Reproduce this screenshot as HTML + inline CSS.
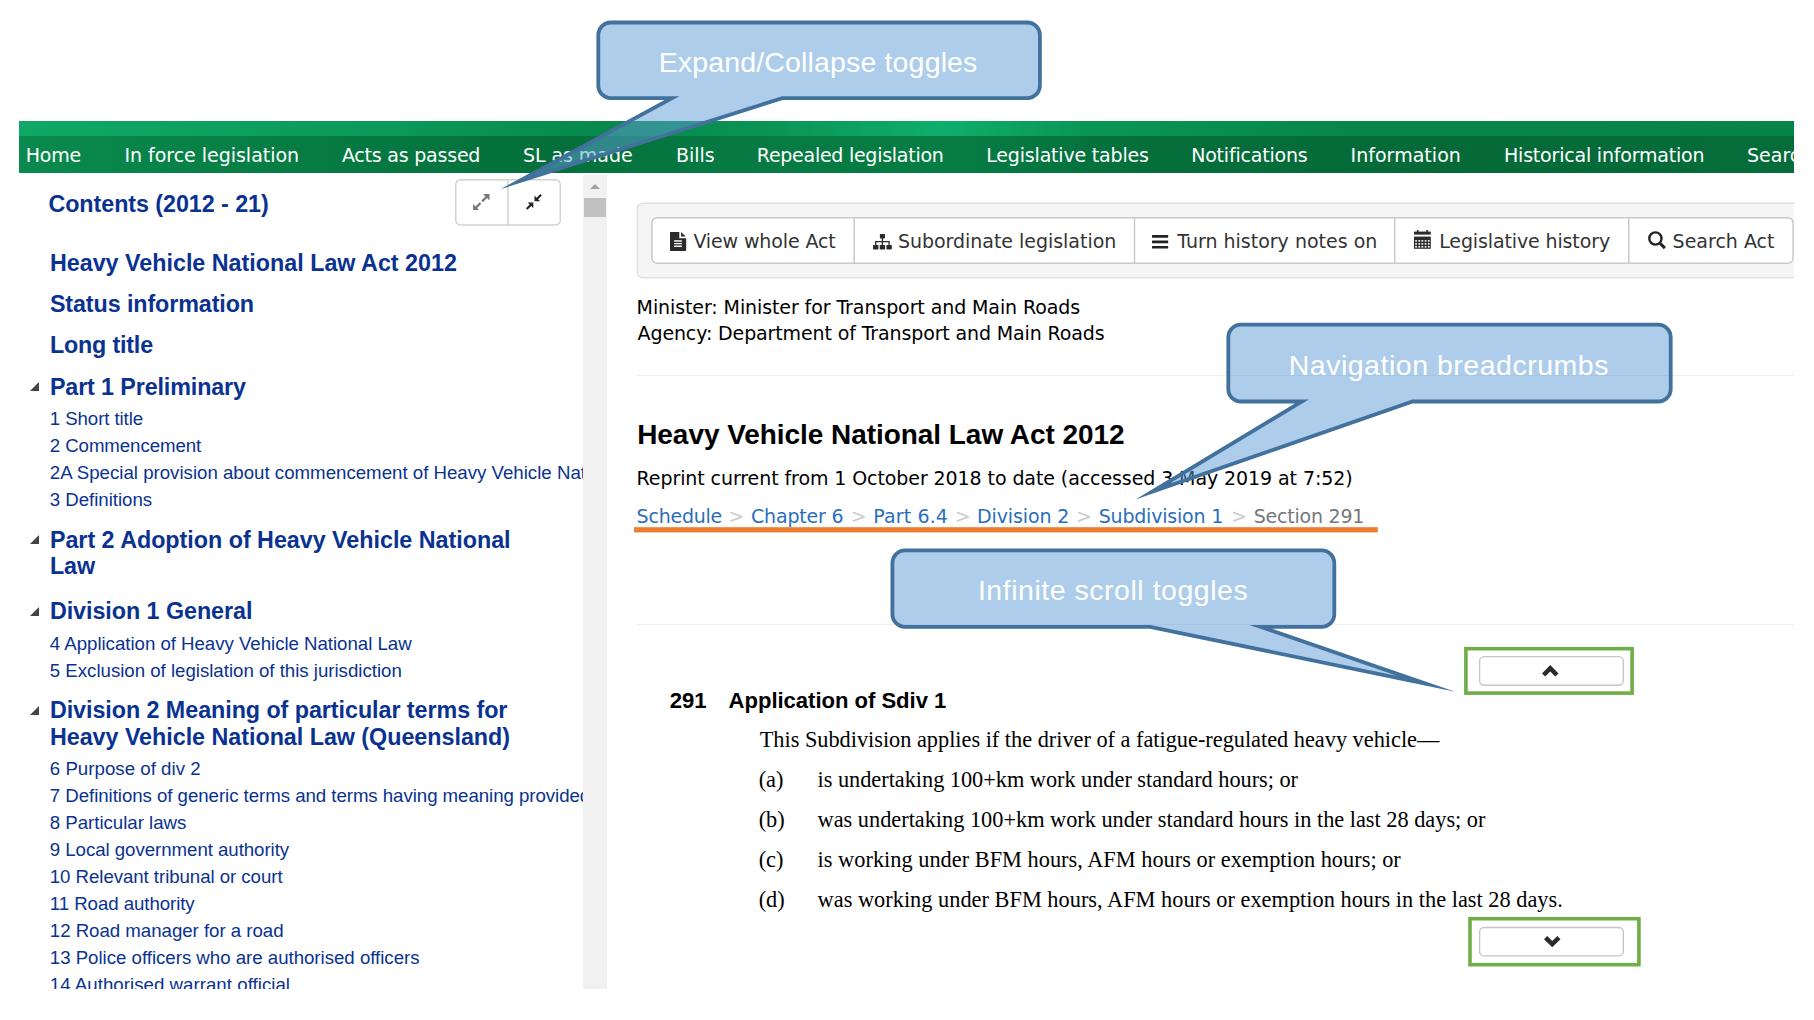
<!DOCTYPE html>
<html lang="en">
<head>
<meta charset="utf-8">
<title>Heavy Vehicle National Law Act 2012</title>
<style>
html,body{margin:0;padding:0;background:#fff}
body{width:1814px;height:1020px;position:relative;overflow:hidden;font-family:"DejaVu Sans","Liberation Sans",sans-serif;color:#000}
#shot{position:absolute;left:19px;top:121px;width:1775px;height:868px;overflow:hidden;background:#fff}
.t{position:absolute;white-space:pre;line-height:normal;margin:0;padding:0;font-weight:400;font-style:normal;text-decoration:none;display:block}
/* nav */
#nav{position:absolute;left:0;top:0;width:1775px;height:52px;overflow:hidden;
 background:linear-gradient(90deg,#0a8a4e 0%,#067a42 18%,#056f3c 30%,#067a42 40%,#067d44 52%,#056e3b 64%,#056a38 80%,#056c3a 100%)}
#nav .strip{position:absolute;left:0;top:0;width:100%;height:15px;
 background:linear-gradient(90deg,#10a866 0%,#0b9a5b 20%,#08884c 33%,#0a9355 42%,#0fae6c 52%,#0a9657 60%,#07864b 75%,#07844a 100%)}
.nv{color:#fff;font-family:"DejaVu Sans","Liberation Sans",sans-serif}
/* sidebar */
#side{position:absolute;left:0;top:52px;width:564px;height:816px;overflow:hidden;background:#fff}
.hd{font-family:"Liberation Sans",sans-serif;font-weight:700;color:#0a3291}
.it{font-family:"Liberation Sans",sans-serif;color:#0a3291}
.tri{position:absolute;width:0;height:0;border-style:solid;border-width:0 0 9px 9.4px;border-color:transparent transparent #444 transparent}
#tog{position:absolute}
#tog svg{position:absolute}
#sbar{position:absolute;background:#f1f1f1}
#sbar .th{position:absolute;background:#c1c1c1}
#sbar .up{position:absolute;width:0;height:0;border-style:solid;border-color:transparent transparent #a3a3a3 transparent}
/* main */
#main{position:absolute;left:588px;top:52px;width:1187px;height:816px;overflow:hidden;background:#fff}
#well{position:absolute;background:#f5f5f5;border-radius:5.5px}
#grp{position:absolute;background:#fff;border-radius:5.5px}
.frm{position:absolute;left:0;top:0;overflow:hidden}
.bdv{position:absolute;width:1.4px;background:#ccc}
.bt{color:#333}
.ico{position:absolute;overflow:visible}
.mt{color:#000}
.hr{position:absolute;margin:0;border:0;height:1.4px;background:#eee;left:29.6px;width:1160px}
.ttl{font-family:"Liberation Sans",sans-serif;font-weight:700;color:#000}
.cl{color:#2a6ebb}.cs{color:#ccc}.ce{color:#777}
.sh{font-family:"Liberation Sans",sans-serif;font-weight:700}
.bd{font-family:"Liberation Serif",serif}
/* overlays */
#ov{position:absolute;left:0;top:0;width:1814px;height:1020px;pointer-events:none}
.co{color:#fff;font-family:"Liberation Sans",sans-serif}
</style>
</head>
<body>
<div id="shot">
<nav id="nav"><div class="strip"></div>
<a class="t nv" style="left:6.70px;top:23.00px;font-size:19.0px;letter-spacing:-0.2px;">Home</a>
<a class="t nv" style="left:105.40px;top:23.00px;font-size:19.0px;letter-spacing:-0.021px;">In force legislation</a>
<a class="t nv" style="left:322.90px;top:23.00px;font-size:19.0px;letter-spacing:-0.216px;">Acts as passed</a>
<a class="t nv" style="left:504.00px;top:23.00px;font-size:19.0px;letter-spacing:-0.066px;">SL as made</a>
<a class="t nv" style="left:657.00px;top:23.00px;font-size:19.0px;">Bills</a>
<a class="t nv" style="left:737.80px;top:23.00px;font-size:19.0px;letter-spacing:-0.263px;">Repealed legislation</a>
<a class="t nv" style="left:967.30px;top:23.00px;font-size:19.0px;letter-spacing:-0.188px;">Legislative tables</a>
<a class="t nv" style="left:1172.20px;top:23.00px;font-size:19.0px;letter-spacing:-0.2px;">Notifications</a>
<a class="t nv" style="left:1331.50px;top:23.00px;font-size:19.0px;letter-spacing:0.04px;">Information</a>
<a class="t nv" style="left:1485.00px;top:23.00px;font-size:19.0px;letter-spacing:-0.2px;">Historical information</a>
<a class="t nv" style="left:1728.00px;top:23.00px;font-size:19.0px;">Search</a>
</nav>
<aside id="side">
<h2 class="t hd" style="left:29.40px;top:18.00px;font-size:23.3px;letter-spacing:-0.053px;">Contents (2012 - 21)</h2>
<div id="tog" style="left:435.50px;top:6.10px;width:106.10px;height:46.80px"><svg style="left:0;top:0" width="106.1" height="46.8" viewBox="454.5 179.1 106.1 46.8"><rect x="455.25" y="179.85" width="104.60" height="45.30" rx="5" fill="#fff" stroke="#d2d2d2" stroke-width="1.5"/><path d="M507.4 179.85V225.15" stroke="#d2d2d2" stroke-width="1.5"/></svg><svg style="left:18.70px;top:14.70px" width="16.6" height="16.4" viewBox="0 0 16 16"><g fill="#777" stroke="none"><path d="M9.7 0H16V6.3L13.6 3.9 9.55 7.95 8.05 6.45 12.1 2.4Z"/><path d="M6.3 16H0V9.7L2.4 12.1 6.45 8.05 7.95 9.55 3.9 13.6Z"/></g></svg><svg style="left:71.50px;top:15.00px" width="15.8" height="15.8" viewBox="0 0 16 16"><g fill="#222" stroke="none"><path d="M8.6 7.4V1.6L10.75 3.75 14.5 0 16 1.5 12.25 5.25 14.4 7.4Z"/><path d="M7.4 8.6V14.4L5.25 12.25 1.5 16 0 14.5 3.75 10.75 1.6 8.6Z"/></g></svg></div>
<a class="t hd" style="left:30.90px;top:77.00px;font-size:23.3px;">Heavy Vehicle National Law Act 2012</a>
<a class="t hd" style="left:30.90px;top:118.00px;font-size:23.3px;letter-spacing:-0.094px;">Status information</a>
<a class="t hd" style="left:30.90px;top:159.00px;font-size:23.3px;letter-spacing:-0.178px;">Long title</a>
<a class="t hd" style="left:30.90px;top:201.00px;font-size:23.3px;letter-spacing:-0.117px;">Part 1 Preliminary</a>
<a class="t it" style="left:30.80px;top:235.00px;font-size:18.66px;letter-spacing:-0.084px;">1 Short title</a>
<a class="t it" style="left:30.80px;top:262.00px;font-size:18.66px;letter-spacing:-0.077px;">2 Commencement</a>
<a class="t it" style="left:30.80px;top:289.00px;font-size:18.66px;">2A Special provision about commencement of Heavy Vehicle National Law</a>
<a class="t it" style="left:30.80px;top:316.00px;font-size:18.66px;letter-spacing:-0.034px;">3 Definitions</a>
<a class="t hd" style="left:30.90px;top:354.00px;font-size:23.3px;letter-spacing:-0.016px;">Part 2 Adoption of Heavy Vehicle National</a>
<a class="t hd" style="left:30.90px;top:380.00px;font-size:23.3px;">Law</a>
<a class="t hd" style="left:30.90px;top:425.00px;font-size:23.3px;letter-spacing:-0.047px;">Division 1 General</a>
<a class="t it" style="left:30.80px;top:460.00px;font-size:18.66px;letter-spacing:-0.028px;">4 Application of Heavy Vehicle National Law</a>
<a class="t it" style="left:30.80px;top:487.00px;font-size:18.66px;letter-spacing:-0.013px;">5 Exclusion of legislation of this jurisdiction</a>
<a class="t hd" style="left:30.90px;top:524.00px;font-size:23.3px;letter-spacing:-0.049px;">Division 2 Meaning of particular terms for</a>
<a class="t hd" style="left:30.90px;top:551.00px;font-size:23.3px;letter-spacing:-0.021px;">Heavy Vehicle National Law (Queensland)</a>
<a class="t it" style="left:30.80px;top:585.00px;font-size:18.66px;letter-spacing:0.023px;">6 Purpose of div 2</a>
<a class="t it" style="left:30.80px;top:612.00px;font-size:18.66px;letter-spacing:-0.047px;">7 Definitions of generic terms and terms having meaning provided by Heavy Vehicle National Law</a>
<a class="t it" style="left:30.80px;top:639.00px;font-size:18.66px;letter-spacing:-0.025px;">8 Particular laws</a>
<a class="t it" style="left:30.80px;top:666.00px;font-size:18.66px;letter-spacing:-0.045px;">9 Local government authority</a>
<a class="t it" style="left:30.80px;top:693.00px;font-size:18.66px;letter-spacing:-0.057px;">10 Relevant tribunal or court</a>
<a class="t it" style="left:30.80px;top:720.00px;font-size:18.66px;letter-spacing:-0.062px;">11 Road authority</a>
<a class="t it" style="left:30.80px;top:747.00px;font-size:18.66px;letter-spacing:-0.024px;">12 Road manager for a road</a>
<a class="t it" style="left:30.80px;top:774.00px;font-size:18.66px;letter-spacing:-0.018px;">13 Police officers who are authorised officers</a>
<a class="t it" style="left:30.80px;top:801.00px;font-size:18.66px;letter-spacing:0.034px;">14 Authorised warrant official</a>
<i class="tri" style="left:11.4px;top:209.1px"></i>
<i class="tri" style="left:11.4px;top:362.3px"></i>
<i class="tri" style="left:11.4px;top:433.6px"></i>
<i class="tri" style="left:11.4px;top:532.7px"></i>
</aside>
<div id="sbar" style="left:564.00px;top:53.80px;width:24.80px;height:814.20px"><i class="up" style="left:6.9px;top:8.8px;border-width:0 5.5px 5.6px 5.5px"></i><i class="th" style="left:1.0px;top:23.4px;width:21.8px;height:18.6px"></i></div>
<main id="main">
<div id="well" style="left:29.60px;top:29.50px;width:1163.40px;height:75.90px"></div>
<div id="grp" style="left:44.20px;top:43.90px;width:1142.60px;height:47.10px"></div>
<svg class="frm" width="1187" height="816" viewBox="607 173 1187 816"><rect x="637.35" y="203.25" width="1170" height="74.4" rx="5" fill="none" stroke="#e1e1e1" stroke-width="1.5"/><rect x="651.95" y="217.65" width="1141.10" height="45.60" rx="5" fill="none" stroke="#c9c9c9" stroke-width="1.5"/><path d="M854.2 218V263.5" stroke="#c9c9c9" stroke-width="1.5"/><path d="M1134.5 218V263.5" stroke="#c9c9c9" stroke-width="1.5"/><path d="M1394.7 218V263.5" stroke="#c9c9c9" stroke-width="1.5"/><path d="M1628.8 218V263.5" stroke="#c9c9c9" stroke-width="1.5"/><rect x="1479.6" y="656.6" width="143.7" height="28.6" rx="4.5" fill="#fff" stroke="#c6c6c6" stroke-width="1.4"/><rect x="1479.6" y="927.5" width="143.7" height="28.4" rx="4.5" fill="#fff" stroke="#c6c6c6" stroke-width="1.4"/></svg>
<svg class="ico" style="left:63.00px;top:59.00px" width="16.2" height="19" viewBox="0 0 16.2 19"><path fill="#2b2b2b" fill-rule="evenodd" d="M0.8 0H9.3V6.3H16.2V18.2Q16.2 19 15.4 19H0.8Q0 19 0 18.2V0.8Q0 0 0.8 0ZM4.1 8.3V9.8H11.9V8.3ZM4.1 10.9V12.3H11.9V10.9ZM4.1 13.4V14.9H11.9V13.4Z"/><path fill="#2b2b2b" d="M11.1 0.1L15.7 4.6H11.1Z"/></svg>
<svg class="ico" style="left:265.80px;top:60.60px" width="18.8" height="15.4" viewBox="0 0 18.8 15.4"><g fill="#2b2b2b"><rect x="6.9" y="0" width="5.1" height="4.4" rx="0.6"/><rect x="0" y="10.9" width="5.4" height="4.5" rx="0.6"/><rect x="6.7" y="10.9" width="5.4" height="4.5" rx="0.6"/><rect x="13.4" y="10.9" width="5.4" height="4.5" rx="0.6"/></g><path fill="none" stroke="#2b2b2b" stroke-width="1.3" d="M9.4 4V11M2.7 11V7.6H16.1V11"/></svg>
<svg class="ico" style="left:545.20px;top:61.60px" width="16.2" height="13.6" viewBox="0 0 16.2 13.6"><g fill="#222"><rect x="0" y="0" width="16.2" height="2.7" rx="0.5"/><rect x="0" y="5.45" width="16.2" height="2.7" rx="0.5"/><rect x="0" y="10.9" width="16.2" height="2.7" rx="0.5"/></g></svg>
<svg class="ico" style="left:807.00px;top:57.30px" width="16.8" height="18.8" viewBox="0 0 16.8 18.8"><g fill="#2b2b2b"><rect x="0" y="1.6" width="16.8" height="3"/><rect x="2.9" y="0" width="1.6" height="2"/><rect x="12.3" y="0" width="1.6" height="2"/><rect x="0" y="6.6" width="16.8" height="12.2"/></g><g fill="#fff"><rect x="1.2" y="10.1" width="1.7" height="1.6"/><rect x="4.4" y="10.1" width="1.7" height="1.6"/><rect x="7.5" y="10.1" width="1.7" height="1.6"/><rect x="10.7" y="10.1" width="1.7" height="1.6"/><rect x="13.9" y="10.1" width="1.7" height="1.6"/><rect x="1.2" y="13.1" width="1.7" height="1.6"/><rect x="4.4" y="13.1" width="1.7" height="1.6"/><rect x="7.5" y="13.1" width="1.7" height="1.6"/><rect x="10.7" y="13.1" width="1.7" height="1.6"/><rect x="13.9" y="13.1" width="1.7" height="1.6"/><rect x="1.2" y="16.0" width="1.7" height="1.6"/><rect x="4.4" y="16.0" width="1.7" height="1.6"/><rect x="7.5" y="16.0" width="1.7" height="1.6"/><rect x="10.7" y="16.0" width="1.7" height="1.6"/><rect x="13.9" y="16.0" width="1.7" height="1.6"/></g></svg>
<svg class="ico" style="left:1040.90px;top:58.30px" width="18" height="18" viewBox="0 0 18 18"><circle cx="7.4" cy="7.5" r="6.1" fill="none" stroke="#222" stroke-width="2.4"/><path d="M11.5 11.7L16.9 17.1" stroke="#222" stroke-width="3" stroke-linecap="butt"/></svg>
<span class="t bt" style="left:86.40px;top:57.00px;font-size:19.0px;letter-spacing:-0.123px;">View whole Act</span>
<span class="t bt" style="left:290.90px;top:57.00px;font-size:19.0px;letter-spacing:-0.028px;">Subordinate legislation</span>
<span class="t bt" style="left:570.20px;top:57.00px;font-size:19.0px;">Turn history notes on</span>
<span class="t bt" style="left:832.20px;top:57.00px;font-size:19.0px;letter-spacing:-0.123px;">Legislative history</span>
<span class="t bt" style="left:1065.60px;top:57.00px;font-size:19.0px;">Search Act</span>
<div class="t mt" style="left:29.60px;top:123.00px;font-size:19.0px;letter-spacing:-0.095px;">Minister: Minister for Transport and Main Roads</div>
<div class="t mt" style="left:30.60px;top:149.00px;font-size:19.0px;letter-spacing:-0.129px;">Agency: Department of Transport and Main Roads</div>
<hr class="hr" style="top:201.8px">
<h1 class="t ttl" style="left:30.20px;top:246.00px;font-size:27.97px;letter-spacing:-0.036px;">Heavy Vehicle National Law Act 2012</h1>
<div class="t mt" style="left:29.60px;top:294.00px;font-size:19.0px;letter-spacing:-0.089px;">Reprint current from 1 October 2018 to date (accessed 3 May 2019 at 7:52)</div>
<div id="crumbs">
<a class="t cl" style="left:29.60px;top:332.00px;font-size:19.0px;letter-spacing:-0.228px;">Schedule</a>
<span class="t cs" style="left:121.30px;top:332.00px;font-size:19.0px;">&gt;</span>
<a class="t cl" style="left:144.00px;top:332.00px;font-size:19.0px;letter-spacing:-0.176px;">Chapter 6</a>
<span class="t cs" style="left:243.80px;top:332.00px;font-size:19.0px;">&gt;</span>
<a class="t cl" style="left:266.20px;top:332.00px;font-size:19.0px;letter-spacing:0.143px;">Part 6.4</a>
<span class="t cs" style="left:347.70px;top:332.00px;font-size:19.0px;">&gt;</span>
<a class="t cl" style="left:370.10px;top:332.00px;font-size:19.0px;letter-spacing:-0.133px;">Division 2</a>
<span class="t cs" style="left:468.90px;top:332.00px;font-size:19.0px;">&gt;</span>
<a class="t cl" style="left:491.70px;top:332.00px;font-size:19.0px;letter-spacing:-0.2px;">Subdivision 1</a>
<span class="t cs" style="left:624.00px;top:332.00px;font-size:19.0px;">&gt;</span>
<span class="t ce" style="left:646.70px;top:332.00px;font-size:19.0px;letter-spacing:-0.22px;">Section 291</span>
</div>
<hr class="hr" style="top:451.0px">
<svg class="ico" style="left:935.40px;top:492.30px" width="16.5" height="11.6" viewBox="0 0 16.5 11.6"><path fill="#2a2a2a" d="M8.25 0L16.5 8.4 13.3 11.6 8.25 6.5 3.2 11.6 0 8.4Z"/></svg>
<svg class="ico" style="left:936.60px;top:762.80px" width="16.5" height="11.2" viewBox="0 0 16.5 11.2"><path fill="#2a2a2a" d="M8.25 11.2L16.5 3.2 13.3 0 8.25 4.9 3.2 0 0 3.2Z"/></svg>
<span class="t sh" style="left:62.80px;top:515.00px;font-size:22.1px;">291</span>
<span class="t sh" style="left:121.60px;top:515.00px;font-size:22.1px;letter-spacing:-0.04px;">Application of Sdiv 1</span>
<span class="t bd" style="left:152.70px;top:554.00px;font-size:22.33px;letter-spacing:-0.016px;">This Subdivision applies if the driver of a fatigue-regulated heavy vehicle—</span>
<span class="t bd" style="left:151.70px;top:594.00px;font-size:22.33px;">(a)</span>
<span class="t bd" style="left:210.60px;top:594.00px;font-size:22.33px;letter-spacing:-0.032px;">is undertaking 100+km work under standard hours; or</span>
<span class="t bd" style="left:151.70px;top:634.00px;font-size:22.33px;">(b)</span>
<span class="t bd" style="left:210.60px;top:634.00px;font-size:22.33px;letter-spacing:-0.012px;">was undertaking 100+km work under standard hours in the last 28 days; or</span>
<span class="t bd" style="left:151.70px;top:674.00px;font-size:22.33px;">(c)</span>
<span class="t bd" style="left:210.60px;top:674.00px;font-size:22.33px;letter-spacing:0.014px;">is working under BFM hours, AFM hours or exemption hours; or</span>
<span class="t bd" style="left:151.70px;top:714.00px;font-size:22.33px;">(d)</span>
<span class="t bd" style="left:210.60px;top:714.00px;font-size:22.33px;letter-spacing:0.013px;">was working under BFM hours, AFM hours or exemption hours in the last 28 days.</span>
</main>
</div>
<svg id="ov" width="1814" height="1020" viewBox="0 0 1814 1020">
<rect x="634" y="527.2" width="743.8" height="5.2" fill="#ed7d31"/>
<path d="M610.9 22.5H1027.3A12.6 12.6 0 0 1 1039.9 35.1V85.5A12.6 12.6 0 0 1 1027.3 98.1H782.3L518.5 181.5L671.9 98.1H610.9A12.6 12.6 0 0 1 598.3 85.5V35.1A12.6 12.6 0 0 1 610.9 22.5Z" fill="#5b9bd5" fill-opacity="0.5" stroke="#41719c" stroke-width="3.8" stroke-linejoin="miter" stroke-miterlimit="20"/>
<path d="M1240.9 324.6H1658.1A12.6 12.6 0 0 1 1670.7 337.2V388.9A12.6 12.6 0 0 1 1658.1 401.5H1412.6L1152.0 491.8L1302.0 401.5H1240.9A12.6 12.6 0 0 1 1228.3 388.9V337.2A12.6 12.6 0 0 1 1240.9 324.6Z" fill="#5b9bd5" fill-opacity="0.5" stroke="#41719c" stroke-width="3.8" stroke-linejoin="miter" stroke-miterlimit="20"/>
<path d="M905.0 550.4H1321.7A12.6 12.6 0 0 1 1334.3 563.0V614.3A12.6 12.6 0 0 1 1321.7 626.9H1260.7L1426.5 683.9L1150.2 626.9H905.0A12.6 12.6 0 0 1 892.4 614.3V563.0A12.6 12.6 0 0 1 905.0 550.4Z" fill="#5b9bd5" fill-opacity="0.5" stroke="#41719c" stroke-width="3.8" stroke-linejoin="miter" stroke-miterlimit="20"/>
<rect x="1465.9" y="648.7" width="166.2" height="44.4" fill="none" stroke="#70ad47" stroke-width="3.6"/>
<rect x="1470" y="918.7" width="168.9" height="46" fill="none" stroke="#70ad47" stroke-width="3.6"/>
</svg>
<div class="t co" style="left:658.70px;top:46.00px;font-size:28.5px;letter-spacing:0.154px;">Expand/Collapse toggles</div>
<div class="t co" style="left:1288.70px;top:349.00px;font-size:28.5px;letter-spacing:0.514px;">Navigation breadcrumbs</div>
<div class="t co" style="left:977.90px;top:574.00px;font-size:28.5px;letter-spacing:0.528px;">Infinite scroll toggles</div>
</body>
</html>
